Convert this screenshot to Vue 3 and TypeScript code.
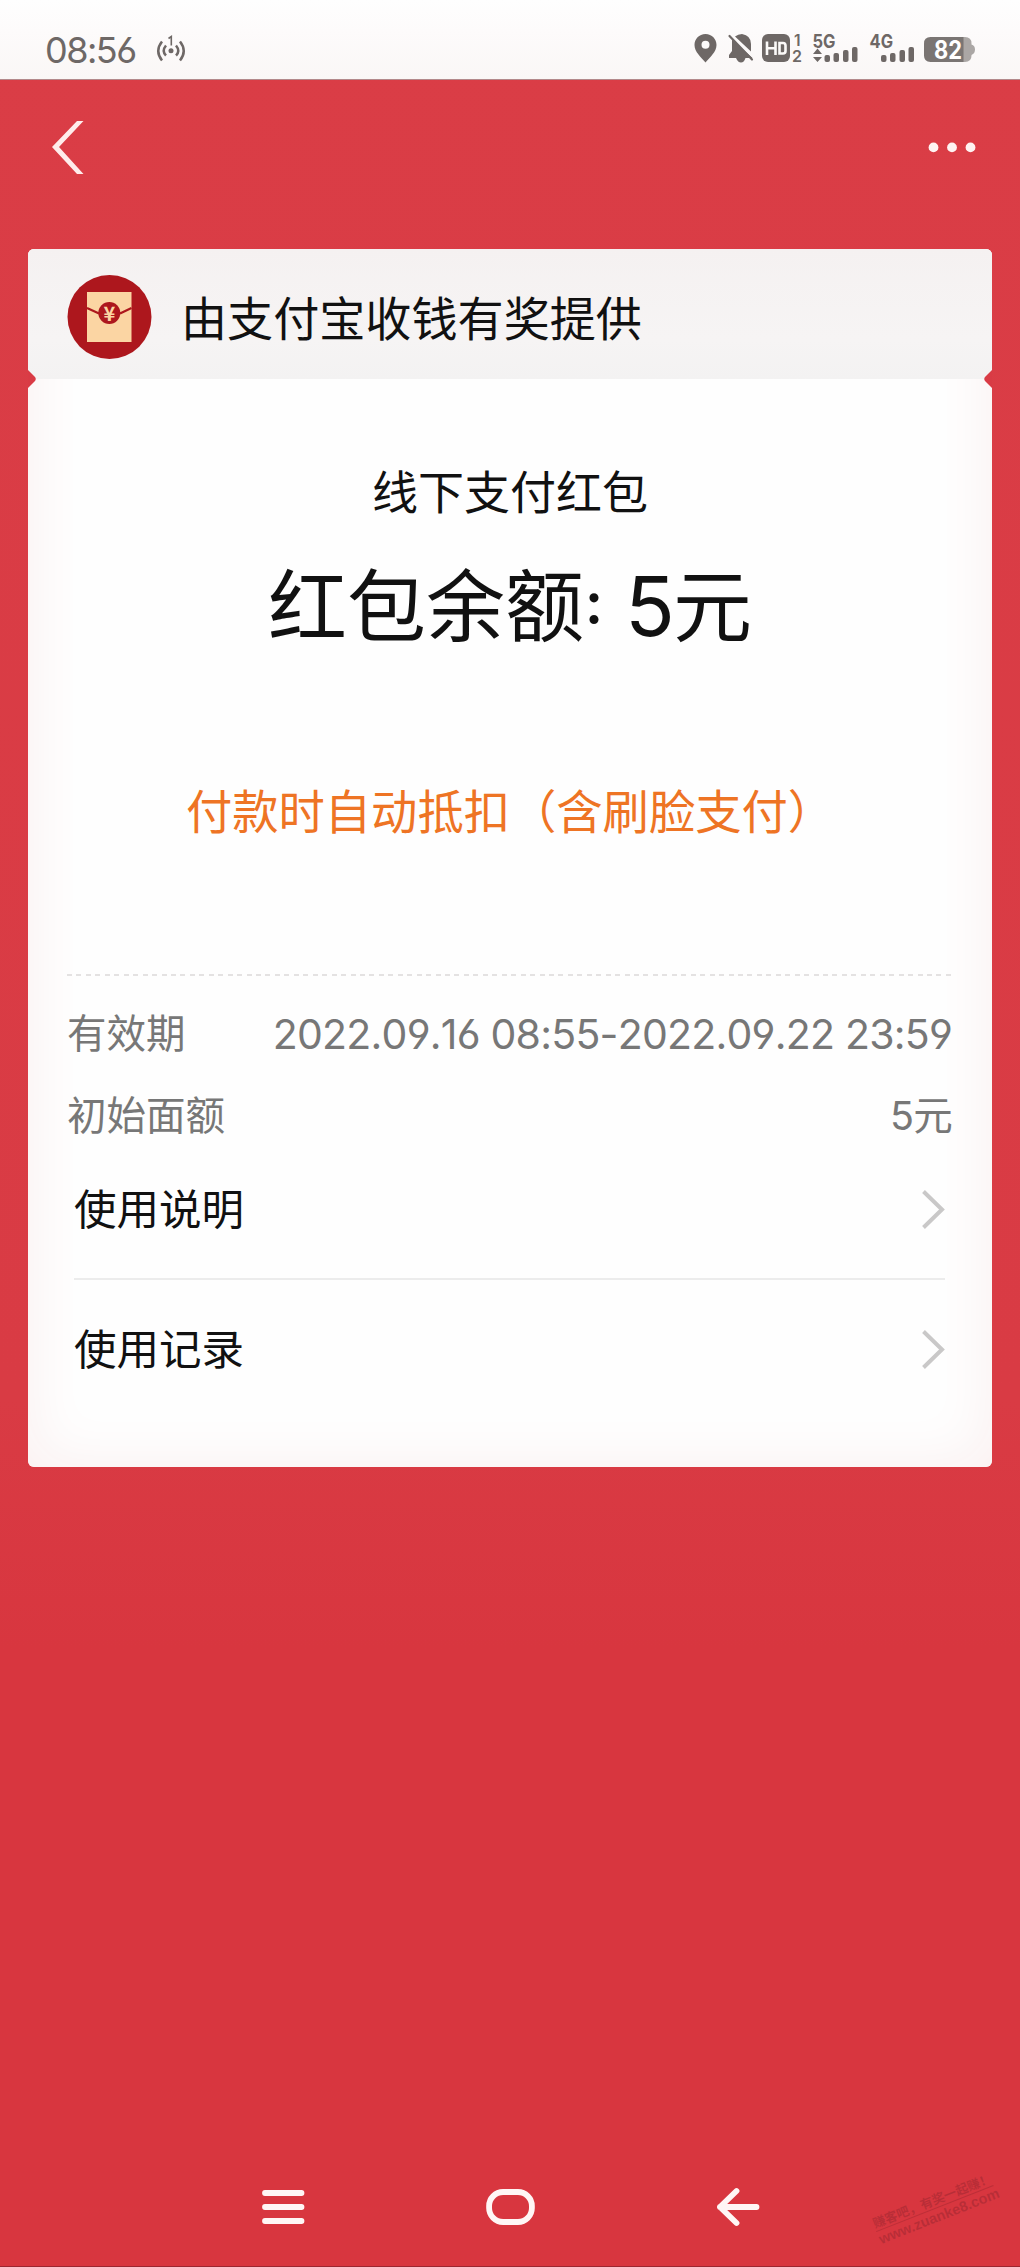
<script setup lang="ts">
interface InfoRow {
  label: string
  value: string
}

const info: InfoRow[] = [
  { label: '有效期', value: '2022.09.16 08:55-2022.09.22 23:59' },
  { label: '初始面额', value: '5元' },
]
const links: string[] = ['使用说明', '使用记录']
</script>

<template>
  <div class="screen">
    <header class="status">
      <span class="clock">08:56</span>
      <svg class="hotspot" viewBox="156 26 30 40" width="30" height="40">
        <g fill="none" stroke="#6e6866" stroke-width="2.5">
          <path d="M162 41.5Q154.500 51 162 60.500" />
          <path d="M166 45.500Q161.500 51 166 55.500" />
          <path d="M180 41.500Q187.500 51 180 60.500" />
          <path d="M176 45.500Q180.500 51 176 55.500" />
          <path d="M168.500 38.500L171.300 36.500V45.500" stroke-width="1.600" />
        </g>
        <circle cx="171" cy="50.800" r="2.500" fill="#6e6866" />
      </svg>

      <svg class="pin" viewBox="694 25 24 45" width="24" height="45">
        <path fill="#6e6866" fill-rule="evenodd" d="M705.500 34C699 34 694.500 39 694.500 45C694.500 52 701 57 705.500 62.500C710 57 716.500 52 716.500 45C716.500 39 712 34 705.500 34ZM705.500 40.800A4 4 0 1 1 705.500 48.800A4 4 0 1 1 705.500 40.800Z" />
      </svg>
      <svg class="bell" viewBox="727 25 28 45" width="28" height="45">
        <path fill="#6e6866" d="M732 39.500L752.500 58H745.500Q744 62.500 741 62.500Q738 62.500 736 58H729V55L732 51ZM735 36.500Q738 34 742 34Q751 35.500 751 44V51.500Z" />
        <path d="M729.500 36L752 59.500" stroke="#6e6866" stroke-width="2.200" stroke-linecap="round" />
      </svg>
      <svg class="hd" viewBox="762 25 42 45" width="42" height="45">
        <rect x="762" y="34" width="28" height="28" rx="6" fill="#6e6866" />
        <path d="M767 41.500V55M775.500 41.500V55M767 48.200H775.500M779.500 43H783Q785.500 43 785.500 45.500V51Q785.500 53.500 783 53.500H779.500Z" fill="none" stroke="#fcfaf9" stroke-width="2.600" />
        <text x="794" y="45.500" class="tiny">1</text>
        <text x="792" y="62" textLength="10" lengthAdjust="spacingAndGlyphs" class="tiny">2</text>
      </svg>
      <svg class="net five" viewBox="812 25 46 45" width="46" height="45">
        <text x="812.500" y="47.500" textLength="23" lengthAdjust="spacingAndGlyphs" class="gen">5G</text>
        <path fill="#6e6866" d="M817.500 48.500L822 54H813ZM817.500 62L822 57H813Z" />
        <g fill="#6e6866">
          <rect x="824.500" y="55" width="5.500" height="7" rx="2" />
          <rect x="833.500" y="53" width="5.500" height="9" rx="2" />
          <rect x="843" y="50" width="5.500" height="12" rx="2" />
          <rect x="852" y="47" width="5.500" height="15" rx="2" />
        </g>
      </svg>
      <svg class="net four" viewBox="869 25 46 45" width="46" height="45">
        <text x="869.500" y="47.500" textLength="23.500" lengthAdjust="spacingAndGlyphs" class="gen">4G</text>
        <g fill="#6e6866">
          <rect x="881" y="55" width="5.500" height="7" rx="2" />
          <rect x="890" y="53" width="5.500" height="9" rx="2" />
          <rect x="899.500" y="50" width="5.500" height="12" rx="2" />
          <rect x="908.500" y="47" width="5.500" height="15" rx="2" />
        </g>
      </svg>
      <svg class="battery" viewBox="924 25 52 45" width="52" height="45">
        <path fill="#aba7a5" d="M958 37H965Q971.500 37 971.500 43.500V44.500Q975 45.500 975 49.500T971.500 55V55.500Q971.500 62 965 62H958Z" />
        <path fill="#7a7573" d="M963.500 37H930.500Q924 37 924 43.500V55.500Q924 62 930.500 62H963.500Z" />
        <text x="934" y="58.800" textLength="28" lengthAdjust="spacingAndGlyphs" class="charge">82</text>
      </svg>
    </header>

    <nav class="topbar">
      <svg viewBox="52 121 32 53" width="32" height="53">
        <path fill="#ffeceb" d="M52 147L77 121H83.500L59 147L83.500 174H77Z" />
      </svg>
      <svg viewBox="928 142 48 11" width="48" height="11">
        <g fill="#fff3f2">
          <circle cx="933.500" cy="147.400" r="4.900" />
          <circle cx="952" cy="147.400" r="4.900" />
          <circle cx="970.500" cy="147.400" r="4.900" />
        </g>
      </svg>
    </nav>

    <main class="card">
      <svg class="notch left" viewBox="0 0 8 18" width="8" height="18"><path fill="#d93b45" d="M0 0L7 7Q8.500 9 7 11L0 18Z" /></svg>
      <svg class="notch right" viewBox="0 0 8 18" width="8" height="18"><path fill="#d93b45" d="M8 0L1 7Q-.5 9 1 11L8 18Z" /></svg>

      <section class="provider">
        <svg viewBox="67 275 85 85" width="85" height="85">
          <circle cx="109.500" cy="317" r="42" fill="#ad171d" />
          <rect x="87" y="292" width="44.500" height="50" fill="#fbd5a3" />
          <path d="M87 308L99 313.500M120 313.500L131.500 308" stroke="#ad171d" stroke-width="2.200" />
          <circle cx="109.300" cy="313" r="11" fill="#ad171d" />
          <text x="109.300" y="320.500" text-anchor="middle" class="yuan">¥</text>
        </svg>
        <span>由支付宝收钱有奖提供</span>
      </section>

      <section class="summary">
        <div class="kind">线下支付红包</div>
        <div class="amount"><span>红包余额</span><span class="colon">:</span><span class="num">5</span><span>元</span></div>
        <div class="tip">付款时自动抵扣（含刷脸支付）</div>
      </section>

      <div class="dashes"></div>

      <dl class="info">
        <div v-for="row in info" :key="row.label" class="info-row">
          <dt>{{ row.label }}</dt>
          <dd>{{ row.value }}</dd>
        </div>
      </dl>

      <ul class="links">
        <li v-for="name in links" :key="name">
          <span>{{ name }}</span>
          <svg viewBox="0 0 23 39" width="23" height="39"><path d="M1.500 1.500L20 19.500L1.500 37.500" fill="none" stroke="#c9c8c8" stroke-width="4" /></svg>
        </li>
      </ul>
    </main>

    <footer class="keys">
      <svg viewBox="0 0 49 46" width="49" height="46"><path d="M6 9H42.500M6 23H42.500M6 37H42.500" stroke="#fff6f5" stroke-width="5.800" stroke-linecap="round" /></svg>
      <svg viewBox="0 0 49 46" width="49" height="46"><rect x="3.100" y="8" width="42.800" height="30" rx="14" fill="none" stroke="#fff6f5" stroke-width="5.800" /></svg>
      <svg viewBox="0 0 49 46" width="49" height="46"><path d="M44.500 23H8M24.500 7L8 23L24.500 39" fill="none" stroke="#fff6f5" stroke-width="5.800" stroke-linecap="round" stroke-linejoin="round" /></svg>
    </footer>

    <div class="watermark">
      <div class="slogan">赚客吧，有奖一起赚！</div>
      <div class="site">www.zuanke8.com</div>
    </div>
  </div>
</template>

<style>
body {
  margin: 0;
}
</style>

<style scoped>
.screen {
  position: relative;
  display: flex;
  flex-direction: column;
  box-sizing: border-box;
  width: 1020px;
  height: 2267px;
  overflow: hidden;
  border-bottom: 1px solid #9c2630;
  background: linear-gradient(#da3d46 0, #d93b44 1400px, #d8363f 1650px, #d8363f 100%);
  color: #111;
  font-family: Inter, "Noto Sans CJK SC", sans-serif;
  font-feature-settings: "cv03", "cv04", "ss03", "ss07" 0, "ss08";
}
.screen > * {
  flex: none;
}
svg {
  display: block;
  flex: none;
}
.status {
  display: flex;
  box-sizing: border-box;
  height: 80px;
  padding: 25px 44px 0 45px;
  border-bottom: 1px solid #b3898b;
  background: linear-gradient(#fefefe, #fdfbfb 40%, #faf7f6);
}
.clock {
  width: 111px;
  margin-top: 3px;
  color: #6e6866;
  font-size: 36px;
  line-height: 44px;
  letter-spacing: -1.5px;
}
.hotspot {
  margin-top: 1px;
}
.pin {
  margin-left: auto;
}
.bell {
  margin-left: 9px;
}
.hd {
  margin-left: 7px;
}
.five {
  margin-left: 8px;
}
.four {
  margin-left: 11px;
}
.battery {
  margin-left: 9px;
}
.tiny {
  fill: #6e6866;
  font: 600 15.5px Inter, sans-serif;
}
.gen {
  fill: #6e6866;
  font: 700 18.5px Inter, sans-serif;
}
.charge {
  fill: #fff;
  font: 700 25px Inter, sans-serif;
}
.topbar {
  display: flex;
  align-items: center;
  justify-content: space-between;
  height: 135px;
  padding: 0 44px 0 52px;
}
.card {
  position: relative;
  height: 1218px;
  margin: 34px 28px 0;
  border-radius: 6px;
  background: #fefefe;
  overflow: hidden;
  box-shadow: inset 0 0 60px #faefef;
}
.notch {
  position: absolute;
  top: 121px;
}
.left {
  left: 0;
}
.right {
  right: 0;
}
.provider {
  display: flex;
  align-items: center;
  box-sizing: border-box;
  height: 130px;
  padding: 7px 39px 0;
  background: linear-gradient(#f5f1f1, #f6f4f4 70%, #f3f2f2);
  font-size: 46.100px;
  line-height: 60px;
}
.provider span {
  margin-left: 29px;
  padding-bottom: 4px;
  font-family: "Noto Sans CJK SC", sans-serif;
}
.yuan {
  fill: #fbd5a3;
  font: 700 20px "Noto Sans CJK SC", sans-serif;
}
.summary {
  height: 595px;
  text-align: center;
  font-family: "Noto Sans CJK SC", sans-serif;
}
.kind {
  padding-top: 80px;
  font-size: 46px;
  line-height: 60px;
}
.amount {
  display: flex;
  align-items: baseline;
  justify-content: center;
  height: 108px;
  margin-top: 29px;
  font-size: 79px;
  line-height: 108px;
}
.colon,
.num {
  font-family: Inter, sans-serif;
  font-size: 82px;
}
.colon {
  width: 20px;
  font-size: 58px;
  font-weight: 600;
  transform: translateY(-13px);
}
.num {
  width: 48px;
  padding-left: 21px;
}
.tip {
  margin-top: 123px;
  color: #ee7424;
  font-size: 46.300px;
  line-height: 60px;
}
.dashes {
  height: 2px;
  margin: 0 38px 0 39px;
  background: repeating-linear-gradient(90deg, #e4e2e2 0 5px, transparent 5px 9.450px);
}
.info {
  margin: 0;
  padding: 34px 40px 0 39px;
  color: #777;
  font-size: 39.500px;
}
.info-row {
  display: flex;
  justify-content: space-between;
  height: 48px;
  line-height: 48px;
}
.info-row + .info-row {
  margin-top: 34px;
}
.info dd {
  margin: 0;
  font-size: 41px;
  font-kerning: none;
  letter-spacing: -.770px;
}
.info-row + .info-row dd {
  font-size: 39.500px;
}
.links {
  margin: 0 47px 0 46px;
  padding: 0;
  list-style: none;
  font-family: "Noto Sans CJK SC", sans-serif;
  font-size: 42.500px;
}
.links li {
  display: flex;
  align-items: center;
  justify-content: space-between;
  height: 138px;
}
.links li + li {
  border-top: 2px solid #ececec;
}
.links span {
  padding-bottom: 6px;
}
.keys {
  display: flex;
  justify-content: space-between;
  margin: 717px 259px 0 259px;
}
.watermark {
  position: absolute;
  left: 872px;
  top: 2192px;
  width: 126px;
  transform: rotate(-21.500deg);
  color: rgba(125, 30, 40, .34);
  font-weight: 700;
  text-align: center;
  white-space: nowrap;
}
.slogan {
  border-bottom: 1px solid rgba(125, 30, 40, .3);
  font: 700 12.700px/16px "Noto Sans CJK SC", sans-serif;
}
.site {
  font: 700 14.500px/17px "Liberation Sans", sans-serif;
}
</style>
